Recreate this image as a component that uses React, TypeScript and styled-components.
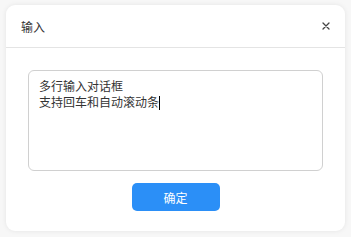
import { styled, createGlobalStyle } from 'styled-components';

const GlobalStyle = createGlobalStyle`
    html, body {
        margin: 0;
        padding: 0;
        background: #f7f7f7;
        font-family: "Noto Sans CJK SC", "Noto Sans", sans-serif;
    }
`;

const lines = ['多行输入对话框', '支持回车和自动滚动条'];

const App = () => {
    return (
        <>
            <GlobalStyle />
            <Page>
                <Dialog>
                    <Header>
                        <Title>输入</Title>
                        <Close aria-label="close">
                            <svg width="8" height="8" viewBox="0 0 8 8">
                                <path d="M1 1L7 7M7 1L1 7" stroke="#444" strokeWidth="1.3" strokeLinecap="round" />
                            </svg>
                        </Close>
                    </Header>
                    <Body>
                        <Editor>
                            {lines.map((line, i) => (
                                <Line key={line}>
                                    {line}
                                    {i === lines.length - 1 && <Caret />}
                                </Line>
                            ))}
                        </Editor>
                        <OkButton>确定</OkButton>
                    </Body>
                </Dialog>
            </Page>
        </>
    );
};

export default App;

const Page = styled.div`
    width: 351px;
    height: 237px;
    padding: 5px 6px 6px 6px;
    box-sizing: border-box;
`;

const Dialog = styled.div`
    width: 339px;
    height: 226px;
    background: #fff;
    border-radius: 9px;
    box-shadow: 0 0 5px rgba(0, 0, 0, 0.08);
    display: flex;
    flex-direction: column;
`;

const Header = styled.div`
    height: 42px;
    display: flex;
    align-items: center;
    justify-content: space-between;
    padding: 0 15px 0 15px;
    border-bottom: 1px solid #e4e4e4;
`;

const Title = styled.span`
    font-size: 12px;
    color: #333;
`;

const Close = styled.button`
    border: none;
    background: none;
    padding: 0;
    width: 8px;
    height: 8px;
    display: flex;
    cursor: pointer;
`;

const Body = styled.div`
    flex: 1;
    display: flex;
    flex-direction: column;
    align-items: center;
    padding: 22px 22px 0 22px;
    gap: 12px;
`;

const Editor = styled.div`
    width: 100%;
    height: 101px;
    box-sizing: border-box;
    border: 1px solid #d0d0d0;
    border-radius: 6px;
    padding: 7px 10px;
    font-size: 12px;
    line-height: 16px;
    color: #333;
    overflow-y: auto;
    cursor: text;
`;

const Line = styled.div`
    white-space: pre;
`;

const Caret = styled.span`
    display: inline-block;
    width: 1px;
    height: 14px;
    background: #000;
    vertical-align: -3px;
`;

const OkButton = styled.button`
    width: 88px;
    height: 28px;
    border: none;
    border-radius: 5px;
    background: #2b8ff7;
    color: #fff;
    font-family: "Noto Sans CJK SC", "Noto Sans", sans-serif;
    font-size: 12px;
    cursor: pointer;
`;
